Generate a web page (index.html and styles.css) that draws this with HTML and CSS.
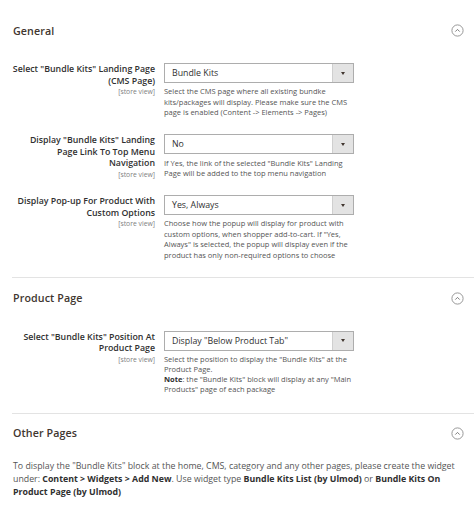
FILE: index.html
```html
<!DOCTYPE html>
<html>
<head>
<meta charset="utf-8">
<link rel="stylesheet" href="styles.css">
</head>
<body>
<div class="page">
  <section class="section section--first">
    <div class="section-head">
      <h2 class="section-title">General</h2>
      <svg class="toggle" width="13" height="13" viewBox="0 0 13 13"><circle cx="6.5" cy="6.5" r="5.6" fill="none" stroke="#8c8c8c" stroke-width="0.9"/><path d="M4.3 7.6 L6.5 5.4 L8.7 7.6" fill="none" stroke="#6e6e6e" stroke-width="0.9"/></svg>
    </div>
    <div class="section-body">
      <div class="field">
        <div class="label">Select "Bundle Kits" Landing Page (CMS Page)<span class="scope">[store view]</span></div>
        <div class="control">
          <div class="select"><span class="select-value">Bundle Kits</span><span class="select-arrow"><i class="tri"></i></span></div>
          <div class="note">Select the CMS page where all existing bundke kits/packages will display. Please make sure the CMS page is enabled (Content -&gt; Elements -&gt; Pages)</div>
        </div>
      </div>
      <div class="field">
        <div class="label">Display "Bundle Kits" Landing Page Link To Top Menu Navigation<span class="scope">[store view]</span></div>
        <div class="control">
          <div class="select"><span class="select-value">No</span><span class="select-arrow"><i class="tri"></i></span></div>
          <div class="note note--low">If Yes, the link of the selected "Bundle Kits" Landing Page will be added to the top menu navigation</div>
        </div>
      </div>
      <div class="field">
        <div class="label">Display Pop-up For Product With Custom Options<span class="scope">[store view]</span></div>
        <div class="control">
          <div class="select"><span class="select-value">Yes, Always</span><span class="select-arrow"><i class="tri"></i></span></div>
          <div class="note">Choose how the popup will display for product with custom options, when shopper add-to-cart. If "Yes, Always" is selected, the popup will display even if the product has only non-required options to choose</div>
        </div>
      </div>
    </div>
  </section>

  <section class="section">
    <div class="section-head">
      <h2 class="section-title">Product Page</h2>
      <svg class="toggle" width="13" height="13" viewBox="0 0 13 13"><circle cx="6.5" cy="6.5" r="5.6" fill="none" stroke="#8c8c8c" stroke-width="0.9"/><path d="M4.3 7.6 L6.5 5.4 L8.7 7.6" fill="none" stroke="#6e6e6e" stroke-width="0.9"/></svg>
    </div>
    <div class="section-body section-body--product">
      <div class="field">
        <div class="label">Select "Bundle Kits" Position At Product Page<span class="scope">[store view]</span></div>
        <div class="control">
          <div class="select"><span class="select-value">Display "Below Product Tab"</span><span class="select-arrow"><i class="tri"></i></span></div>
          <div class="note note--tight">Select the position to display the "Bundle Kits" at the Product Page.<br><b>Note</b>: the "Bundle Kits" block will display at any "Main Products" page of each package</div>
        </div>
      </div>
    </div>
  </section>

  <section class="section">
    <div class="section-head section-head--short">
      <h2 class="section-title">Other Pages</h2>
      <svg class="toggle" width="13" height="13" viewBox="0 0 13 13"><circle cx="6.5" cy="6.5" r="5.6" fill="none" stroke="#8c8c8c" stroke-width="0.9"/><path d="M4.3 7.6 L6.5 5.4 L8.7 7.6" fill="none" stroke="#6e6e6e" stroke-width="0.9"/></svg>
    </div>
    <div class="section-body section-body--text">
      <p class="info">To display the "Bundle Kits" block at the home, CMS, category and any other pages, please create the widget under: <b>Content &gt; Widgets &gt; Add New</b>. Use widget type <b>Bundle Kits List (by Ulmod)</b> or <b>Bundle Kits On Product Page (by Ulmod)</b></p>
    </div>
  </section>
</div>
</body>
</html>
```

FILE: styles.css
```css
html, body {
  margin: 0;
  padding: 0;
  background: #ffffff;
}
body {
  font-family: "Open Sans", "Noto Sans", sans-serif;
  color: #303030;
  width: 474px;
  overflow: hidden;
}
.page {
  padding-top: 10px;
  padding-left: 12px;
}
.section {
  border-top: 1px solid #e3e3e3;
}
.section--first {
  border-top: 0;
}
.section-head {
  height: 41px;
  display: flex;
  align-items: center;
  justify-content: space-between;
  padding-left: 1px;
  padding-right: 10px;
}
.section-head--short {
  height: 39px;
}
.section-title {
  margin: 0;
  font-size: 10.7px;
  font-weight: 600;
  color: #41362f;
  letter-spacing: 0.1px;
}
.toggle {
  display: block;
}
.section-body {
  padding-top: 12px;
}
.section-body--product {
  padding-bottom: 2px;
}
.section-body--text {
  padding-top: 7px;
  padding-bottom: 10px;
}
.field {
  display: grid;
  grid-template-columns: 143px 190px;
  column-gap: 9px;
  margin-bottom: 16px;
}
.label {
  text-align: right;
  font-size: 8.8px;
  line-height: 11.5px;
  font-weight: 600;
  color: #303030;
  padding-top: 1px;
}
.scope {
  display: block;
  font-size: 6.8px;
  line-height: 9px;
  font-weight: 400;
  color: #808080;
}
.control {
  display: flex;
  flex-direction: column;
}
.select {
  height: 20px;
  box-sizing: border-box;
  border: 1px solid #adadad;
  display: flex;
  align-items: stretch;
  background: #ffffff;
}
.select-value {
  flex: 1;
  display: flex;
  align-items: center;
  padding-left: 7px;
  font-size: 8.8px;
  color: #303030;
}
.select-arrow {
  width: 20px;
  background: #e3e3e3;
  border-left: 1px solid #cfcfcf;
  display: flex;
  align-items: center;
  justify-content: center;
}
.tri {
  width: 0;
  height: 0;
  border-left: 2.5px solid transparent;
  border-right: 2.5px solid transparent;
  border-top: 3px solid #41362f;
}
.note {
  margin-top: 3px;
  font-size: 7.5px;
  line-height: 10.7px;
  color: #555555;
}
.note--low {
  margin-top: 3.5px;
}
.note b {
  font-weight: 700;
  color: #303030;
}
.note--tight {
  line-height: 10.2px;
  margin-top: 3px;
}
.info {
  margin: 0;
  padding-left: 1px;
  padding-right: 14px;
  font-size: 8.8px;
  line-height: 13px;
  color: #555555;
}
.info b {
  font-weight: 700;
  color: #303030;
}
```
